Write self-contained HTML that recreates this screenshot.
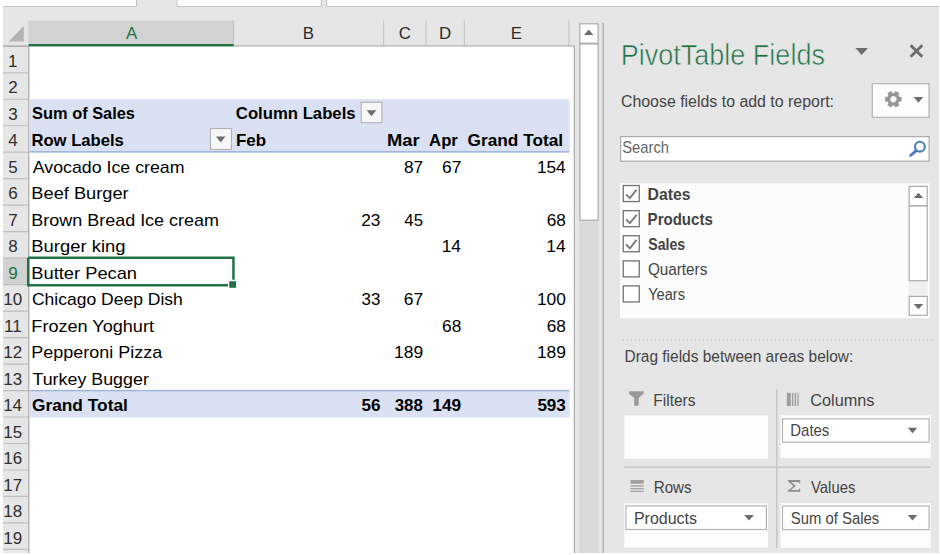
<!DOCTYPE html>
<html><head><meta charset="utf-8"><title>PivotTable</title>
<style>html,body{margin:0;padding:0;background:#fff;overflow:hidden}svg{display:block;font-family:"Liberation Sans",sans-serif}</style>
</head><body>
<svg width="940" height="555" viewBox="0 0 940 555">
<!-- base -->
<rect x="0" y="0" width="940" height="555" fill="#fff"/>
<rect x="3" y="0" width="936" height="553" fill="#e6e6e6"/>
<!-- top formula boxes -->
<rect x="3" y="0" width="133" height="6.5" fill="#fdfdfd"/>
<path d="M3 6.5H136.5V0" fill="none" stroke="#c4c4c4" stroke-width="1"/>
<rect x="177" y="0" width="144.5" height="6.5" fill="#fdfdfd"/>
<path d="M177 0V6.5H321.5V0" fill="none" stroke="#c4c4c4" stroke-width="1"/>
<rect x="326.5" y="0" width="612.5" height="6.5" fill="#fdfdfd"/>
<path d="M326.5 0V6.5H939" fill="none" stroke="#c4c4c4" stroke-width="1"/>
<!-- column headers -->
<rect x="28.3" y="20.5" width="205.2" height="24" fill="#d2d2d2"/>
<path d="M233.5 20.5V45.5M383.6 20.5V45.5M426.1 20.5V45.5M464.4 20.5V45.5M568.9 20.5V45.5" stroke="#c6c6c6" stroke-width="1.2"/>
<path d="M3 46.2H574.5" stroke="#a0a0a0" stroke-width="1.2"/>
<rect x="28.6" y="44" width="204.9" height="2.6" fill="#217346"/>
<polygon points="23.8,26.1 23.8,41.6 8.6,41.6" fill="#b3b3b3"/>
<!-- row headers -->
<rect x="3" y="258.14" width="25.6" height="26.48" fill="#d2d2d2"/>
<path d="M3 72.78H28.6M3 99.26H28.6M3 125.74H28.6M3 152.22H28.6M3 178.70H28.6M3 205.18H28.6M3 231.66H28.6M3 258.14H28.6M3 284.62H28.6M3 311.10H28.6M3 337.58H28.6M3 364.06H28.6M3 390.54H28.6M3 417.02H28.6M3 443.50H28.6M3 469.98H28.6M3 496.46H28.6M3 522.94H28.6M3 549.42H28.6" stroke="#bdbdbd" stroke-width="1.2"/>
<!-- cell area -->
<rect x="29.2" y="46.6" width="544.8" height="506.4" fill="#fff"/>
<path d="M28.8 46V553" stroke="#ababab" stroke-width="1.2"/>
<path d="M574.3 46V553" stroke="#ababab" stroke-width="1.2"/>
<!-- pivot header band -->
<rect x="29.5" y="99.3" width="540" height="52.9" fill="#d9e1f2"/>
<rect x="29.5" y="151.1" width="540" height="1.5" fill="#9db3dc"/>
<rect x="29.5" y="390.5" width="540" height="27.1" fill="#d9e1f2"/>
<rect x="29.5" y="389.9" width="540" height="1.4" fill="#9db3dc"/>
<!-- dropdown buttons in cells -->
<rect x="210.4" y="128.6" width="21" height="20.8" fill="#f7f7f7" stroke="#adadad" stroke-width="1"/>
<polygon points="215.9,136.6 225.5,136.6 220.7,142.6" fill="#6d6d6d"/>
<rect x="361.2" y="102.3" width="20.7" height="20.4" fill="#f7f7f7" stroke="#adadad" stroke-width="1"/>
<polygon points="366.7,110.3 376.3,110.3 371.5,116.3" fill="#6d6d6d"/>
<!-- selection -->
<path d="M28.2 257.8H233.45V279.7M228 285.35H28.2V257.8" fill="none" stroke="#217346" stroke-width="2.5"/>
<rect x="228.5" y="280.4" width="8.4" height="8.2" fill="#fff"/>
<rect x="229.3" y="281.2" width="6.8" height="6.6" fill="#217346"/>
<!-- vertical scrollbar -->
<rect x="579.4" y="44" width="19" height="509" fill="#dadada"/>
<rect x="579.9" y="23.8" width="18.2" height="19.4" fill="#fff" stroke="#ababab" stroke-width="1.2"/>
<polygon points="584,34.9 593.5,34.9 588.75,29.6" fill="#6d6d6d"/>
<rect x="579.9" y="44" width="18.2" height="176.2" fill="#fff" stroke="#ababab" stroke-width="1.2"/>
<path d="M603.2 23V553" stroke="#a8a8a8" stroke-width="1.2"/>
<!-- pane: title icons -->
<polygon points="855.4,48.1 867.9,48.1 861.65,55" fill="#6d6d6d"/>
<path d="M910.6 45.3L922.3 56.8M922.3 45.3L910.6 56.8" stroke="#6d6d6d" stroke-width="2.9"/>
<!-- gear button -->
<rect x="872.3" y="83.7" width="56.7" height="33.6" fill="#fdfdfd" stroke="#b4b4b4" stroke-width="1.2"/>
<g transform="translate(893.4 99.2) rotate(30)" fill="#959595">
  <circle r="6.3"/>
  <rect x="-2.3" y="-8.2" width="4.6" height="16.4"/>
  <rect x="-2.3" y="-8.2" width="4.6" height="16.4" transform="rotate(60)"/>
  <rect x="-2.3" y="-8.2" width="4.6" height="16.4" transform="rotate(120)"/>
  <circle r="3.1" fill="#fdfdfd"/>
</g>
<polygon points="913.7,97 923.2,97 918.45,102.7" fill="#6d6d6d"/>
<!-- search box -->
<rect x="620.6" y="136.6" width="308.5" height="24.6" fill="#fff" stroke="#ababab" stroke-width="1.2"/>
<g stroke="#4a7ebb" fill="none">
  <circle cx="919.9" cy="146.7" r="4.9" stroke-width="2.1"/>
  <path d="M916.3 150.6L910.6 155.4" stroke-width="2.8" stroke-linecap="round"/>
</g>
<!-- field list -->
<rect x="620" y="183.2" width="309.6" height="135" fill="#fcfcfc"/>
<rect x="908.6" y="185.8" width="19.2" height="129.5" fill="#f0f0f0"/>
<rect x="909.2" y="186.4" width="18" height="19.4" fill="#fff" stroke="#ababab" stroke-width="1.2"/>
<polygon points="913.7,197.9 923.2,197.9 918.45,192.8" fill="#6d6d6d"/>
<rect x="909.2" y="206" width="18" height="74.7" fill="#fff" stroke="#ababab" stroke-width="1.2"/>
<rect x="909.2" y="296.4" width="18" height="18.9" fill="#fff" stroke="#ababab" stroke-width="1.2"/>
<polygon points="913.7,303.9 923.2,303.9 918.45,309.3" fill="#6d6d6d"/>
<g fill="#fff" stroke="#737373" stroke-width="1.3">
  <rect x="623.25" y="185.55" width="16" height="16"/>
  <rect x="623.25" y="210.65" width="16" height="16"/>
  <rect x="623.25" y="235.75" width="16" height="16"/>
  <rect x="623.25" y="260.85" width="16" height="16"/>
  <rect x="623.25" y="285.95" width="16" height="16"/>
</g>
<g fill="none" stroke="#7a7a7a" stroke-width="1.9">
  <path d="M626.1 194.3L629.9 198.1L636.6 189.7"/>
  <path d="M626.1 219.4L629.9 223.2L636.6 214.8"/>
  <path d="M626.1 244.5L629.9 248.3L636.6 239.9"/>
</g>
<!-- dotted separator -->
<path d="M622.7 340.2H935" stroke="#b8b8b8" stroke-width="1" stroke-dasharray="1.4 2.6"/>
<!-- areas -->
<path d="M776.8 388.7V548" stroke="#c0c0c0" stroke-width="1.2"/>
<path d="M624.2 467.2H930.8" stroke="#c0c0c0" stroke-width="1.2"/>
<rect x="624.2" y="415.4" width="143.8" height="43.2" fill="#fdfdfd"/>
<rect x="780.4" y="415.3" width="150.4" height="42.9" fill="#fdfdfd"/>
<rect x="624.2" y="503.2" width="143.8" height="44.4" fill="#fdfdfd"/>
<rect x="780.4" y="503" width="150.4" height="44.8" fill="#fdfdfd"/>
<rect x="782.5" y="418.9" width="146.6" height="23.2" fill="#fff" stroke="#b4b4b4" stroke-width="1.2"/>
<polygon points="907.8,427.8 917.3,427.8 912.55,433.2" fill="#6d6d6d"/>
<rect x="625.9" y="505.9" width="140.5" height="23.6" fill="#fff" stroke="#b4b4b4" stroke-width="1.2"/>
<polygon points="744,515 754,515 749,520.6" fill="#6d6d6d"/>
<rect x="782.5" y="506" width="146.6" height="23.6" fill="#fff" stroke="#b4b4b4" stroke-width="1.2"/>
<polygon points="907.8,515 917.3,515 912.55,520.6" fill="#6d6d6d"/>
<!-- area icons -->
<path d="M629.1 391.3H643.7V393.8L638.6 398.1V405.7H634.2V398.1L629.1 393.8Z" fill="#9a9a9a"/>
<g fill="#9d9d9d">
  <rect x="786.8" y="392.8" width="4" height="13.1"/>
  <rect x="793.2" y="392.8" width="1.6" height="13.1" fill="#d6d6d6"/>
  <rect x="791.9" y="392.8" width="1.3" height="13.1"/>
  <rect x="794.8" y="392.8" width="1.3" height="13.1"/>
  <rect x="797.2" y="392.8" width="1.8" height="13.1" fill="#b4b4b4"/>
</g>
<g>
  <rect x="630.5" y="480" width="13.3" height="3.7" fill="#a0a0a0"/>
  <rect x="630.5" y="485" width="13.3" height="1.8" fill="#b2b2b2"/>
  <rect x="630.5" y="488" width="13.3" height="4" fill="#d2d2d2"/>
  <rect x="630.5" y="488" width="13.3" height="1" fill="#a4a4a4"/>
  <rect x="630.5" y="491" width="13.3" height="1" fill="#a4a4a4"/>
</g>
<path d="M787.8 480.1H800.2V483.3H799L798.6 482H791.4L796 486.1L790.8 489.9H798.6L799 488.7H800.2V491.7H787.8V490.7L793.5 486.1L787.8 481.3Z" fill="#8f8f8f"/>

<text transform="translate(125.95 38.7)" font-size="16.86" fill="#217346">A</text>
<text transform="translate(302.7 38.7)" font-size="16.86" fill="#2b2b2b">B</text>
<text transform="translate(398.76 38.7)" font-size="16.86" fill="#2b2b2b">C</text>
<text transform="translate(438.99 38.7)" font-size="16.86" fill="#2b2b2b">D</text>
<text transform="translate(510.81 38.7)" font-size="16.86" fill="#2b2b2b">E</text>
<text transform="translate(8.07 66.9)" font-size="17.01" fill="#2f2f2f">1</text>
<text transform="translate(8.24 93.38)" font-size="17.01" fill="#2f2f2f">2</text>
<text transform="translate(8.32 119.86)" font-size="17.01" fill="#2f2f2f">3</text>
<text transform="translate(8.32 146.34)" font-size="17.01" fill="#2f2f2f">4</text>
<text transform="translate(8.24 172.82)" font-size="17.01" fill="#2f2f2f">5</text>
<text transform="translate(8.15 199.3)" font-size="17.01" fill="#2f2f2f">6</text>
<text transform="translate(8.24 225.78)" font-size="17.01" fill="#2f2f2f">7</text>
<text transform="translate(8.24 252.26)" font-size="17.01" fill="#2f2f2f">8</text>
<text transform="translate(8.32 278.74)" font-size="17.01" fill="#217346">9</text>
<text transform="translate(3.25 305.22)" font-size="17.01" fill="#2f2f2f">10</text>
<text transform="translate(3.97 331.7)" font-size="17.01" fill="#2f2f2f">11</text>
<text transform="translate(3.34 358.18)" font-size="17.01" fill="#2f2f2f">12</text>
<text transform="translate(3.25 384.66)" font-size="17.01" fill="#2f2f2f">13</text>
<text transform="translate(3.17 411.14)" font-size="17.01" fill="#2f2f2f">14</text>
<text transform="translate(3.25 437.62)" font-size="17.01" fill="#2f2f2f">15</text>
<text transform="translate(3.25 464.1)" font-size="17.01" fill="#2f2f2f">16</text>
<text transform="translate(3.34 490.58)" font-size="17.01" fill="#2f2f2f">17</text>
<text transform="translate(3.25 517.06)" font-size="17.01" fill="#2f2f2f">18</text>
<text transform="translate(3.34 543.54)" font-size="17.01" fill="#2f2f2f">19</text>
<text transform="translate(32.07 119.46) scale(0.956 1)" font-size="17.15" font-weight="bold" fill="#000">Sum of Sales</text>
<text transform="translate(235.83 119.46) scale(0.975 1)" font-size="17.15" font-weight="bold" fill="#000">Column Labels</text>
<text transform="translate(31.4 146.24) scale(0.971 1)" font-size="17.15" font-weight="bold" fill="#000">Row Labels</text>
<text transform="translate(235.98 146.24) scale(0.987 1)" font-size="17.15" font-weight="bold" fill="#000">Feb</text>
<text transform="translate(386.9 146.24) scale(1.071 1)" font-size="17.15" font-weight="bold" fill="#000">Mar</text>
<text transform="translate(429.07 146.24) scale(0.975 1)" font-size="17.15" font-weight="bold" fill="#000">Apr</text>
<text transform="translate(467.61 146.24) scale(1.005 1)" font-size="17.15" font-weight="bold" fill="#000">Grand Total</text>
<text transform="translate(32.8 172.72) scale(1.036 1)" font-size="17.15" fill="#000">Avocado Ice cream</text>
<text transform="translate(31.34 199.2) scale(1.064 1)" font-size="17.15" fill="#000">Beef Burger</text>
<text transform="translate(31.36 225.68) scale(1.048 1)" font-size="17.15" fill="#000">Brown Bread Ice cream</text>
<text transform="translate(31.32 252.16) scale(1.076 1)" font-size="17.15" fill="#000">Burger king</text>
<text transform="translate(31.34 278.64) scale(1.067 1)" font-size="17.15" fill="#000">Butter Pecan</text>
<text transform="translate(31.92 305.12) scale(1.022 1)" font-size="17.15" fill="#000">Chicago Deep Dish</text>
<text transform="translate(31.35 331.6) scale(1.055 1)" font-size="17.15" fill="#000">Frozen Yoghurt</text>
<text transform="translate(31.36 358.08) scale(1.049 1)" font-size="17.15" fill="#000">Pepperoni Pizza</text>
<text transform="translate(32.44 384.56) scale(1.041 1)" font-size="17.15" fill="#000">Turkey Bugger</text>
<text transform="translate(31.91 411.04) scale(1.011 1)" font-size="17.15" font-weight="bold" fill="#000">Grand Total</text>
<text transform="translate(404.01 172.92) scale(1.060 1)" font-size="16.28" fill="#000">87</text>
<text transform="translate(442.03 172.92) scale(1.070 1)" font-size="16.28" fill="#000">67</text>
<text transform="translate(536.89 172.92) scale(1.059 1)" font-size="16.28" fill="#000">154</text>
<text transform="translate(361.24 225.88) scale(1.060 1)" font-size="16.28" fill="#000">23</text>
<text transform="translate(404.36 225.88) scale(1.029 1)" font-size="16.28" fill="#000">45</text>
<text transform="translate(546.64 225.88) scale(1.060 1)" font-size="16.28" fill="#000">68</text>
<text transform="translate(441.68 252.36) scale(1.070 1)" font-size="16.28" fill="#000">14</text>
<text transform="translate(546.28 252.36) scale(1.070 1)" font-size="16.28" fill="#000">14</text>
<text transform="translate(361.59 305.32) scale(1.039 1)" font-size="16.28" fill="#000">33</text>
<text transform="translate(403.83 305.32) scale(1.070 1)" font-size="16.28" fill="#000">67</text>
<text transform="translate(536.89 305.32) scale(1.066 1)" font-size="16.28" fill="#000">100</text>
<text transform="translate(442.04 331.8) scale(1.060 1)" font-size="16.28" fill="#000">68</text>
<text transform="translate(546.64 331.8) scale(1.060 1)" font-size="16.28" fill="#000">68</text>
<text transform="translate(394.08 358.28) scale(1.072 1)" font-size="16.28" fill="#000">189</text>
<text transform="translate(536.88 358.28) scale(1.072 1)" font-size="16.28" fill="#000">189</text>
<text transform="translate(361.39 411.24) scale(1.051 1)" font-size="16.28" font-weight="bold" fill="#000">56</text>
<text transform="translate(394.76 411.24) scale(1.034 1)" font-size="16.28" font-weight="bold" fill="#000">388</text>
<text transform="translate(432.26 411.24) scale(1.067 1)" font-size="16.28" font-weight="bold" fill="#000">149</text>
<text transform="translate(537.39 411.24) scale(1.047 1)" font-size="16.28" font-weight="bold" fill="#000">593</text>
<text transform="translate(620.64 65.3) scale(0.935 1)" font-size="28.92" fill="#217346" stroke="#e6e6e6" stroke-width="0.6">PivotTable Fields</text>
<text transform="translate(620.9 106.7) scale(0.970 1)" font-size="16.42" fill="#444">Choose fields to add to report:</text>
<text transform="translate(622.21 152.8) scale(0.924 1)" font-size="15.99" fill="#666">Search</text>
<text transform="translate(647.55 199.6) scale(0.988 1)" font-size="15.99" font-weight="bold" fill="#444">Dates</text>
<text transform="translate(647.6 224.7) scale(0.942 1)" font-size="15.99" font-weight="bold" fill="#444">Products</text>
<text transform="translate(648.22 249.8) scale(0.883 1)" font-size="15.99" font-weight="bold" fill="#444">Sales</text>
<text transform="translate(647.89 274.9) scale(0.956 1)" font-size="15.99" fill="#444">Quarters</text>
<text transform="translate(648.21 300) scale(0.914 1)" font-size="15.99" fill="#444">Years</text>
<text transform="translate(624.46 362.2) scale(0.961 1)" font-size="16.13" fill="#444">Drag fields between areas below:</text>
<text transform="translate(653.36 405.8) scale(0.933 1)" font-size="16.57" fill="#444">Filters</text>
<text transform="translate(810.19 405.9) scale(0.984 1)" font-size="16.57" fill="#444">Columns</text>
<text transform="translate(653.69 493.1) scale(0.933 1)" font-size="16.28" fill="#444">Rows</text>
<text transform="translate(811 492.9) scale(0.915 1)" font-size="16.28" fill="#444">Values</text>
<text transform="translate(633.92 523.6)" font-size="15.99" fill="#444">Products</text>
<text transform="translate(790.3 436.1) scale(0.926 1)" font-size="16.13" fill="#444">Dates</text>
<text transform="translate(790.81 523.5) scale(0.939 1)" font-size="15.84" fill="#444">Sum of Sales</text>
</svg>
</body></html>
